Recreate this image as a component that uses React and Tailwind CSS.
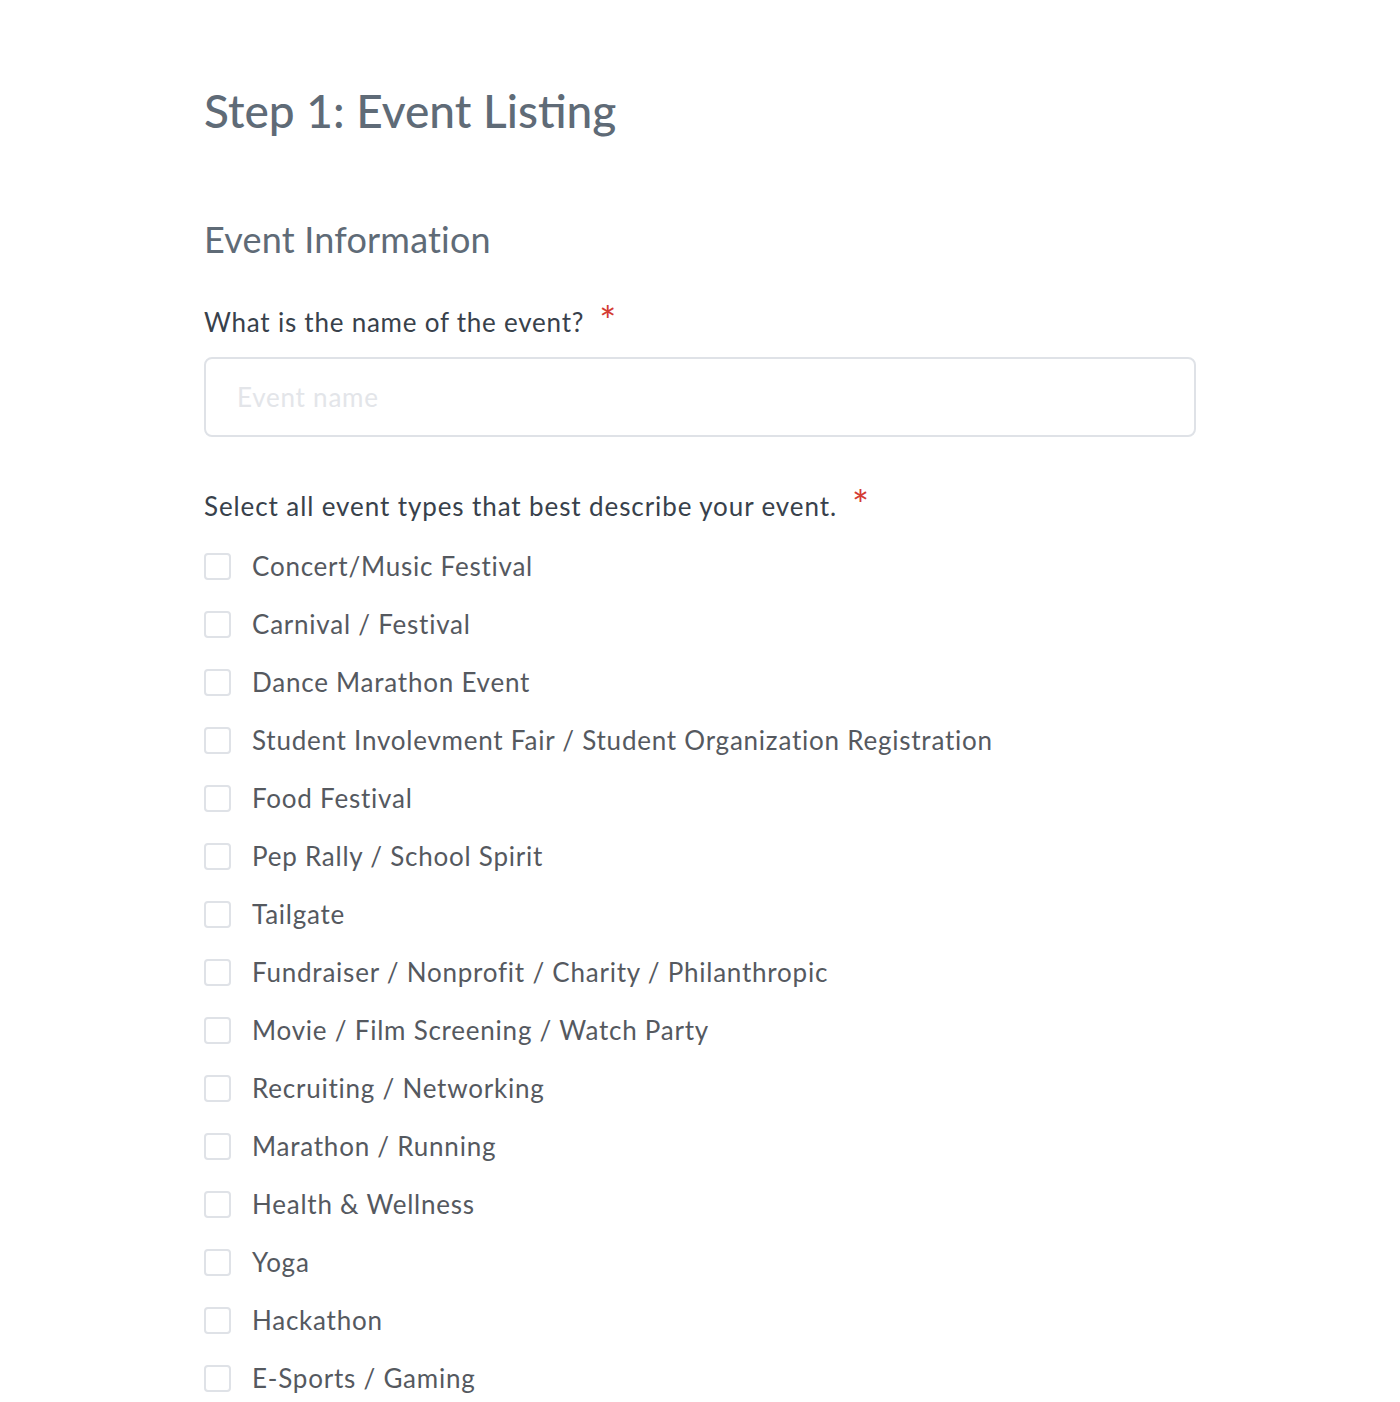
import React from "react";

const eventTypes = [
  "Concert/Music Festival",
  "Carnival / Festival",
  "Dance Marathon Event",
  "Student Involevment Fair / Student Organization Registration",
  "Food Festival",
  "Pep Rally / School Spirit",
  "Tailgate",
  "Fundraiser / Nonprofit / Charity / Philanthropic",
  "Movie / Film Screening / Watch Party",
  "Recruiting / Networking",
  "Marathon / Running",
  "Health & Wellness",
  "Yoga",
  "Hackathon",
  "E-Sports / Gaming",
];

export default function App() {
  return (
    <div className="min-h-screen bg-white font-['Lato','Noto_Sans',sans-serif]">
      <div className="ml-[204px] w-[992px] pt-[82px]">
        <h1 className="text-[46px] leading-[58px] font-medium text-[#5f6b77]">Step 1: Event Listing</h1>

        <h2 className="mt-[77px] text-[36px] leading-[44px] tracking-[0.2px] text-[#5f6b77]">Event Information</h2>

        <div className="mt-[45px] flex h-[32px] items-start text-[26px] leading-[32px] tracking-[0.77px] text-[#38414b]">
          <span>What is the name of the event?</span>
          <span className="ml-[15px] -mt-[5px] text-[40px] leading-none text-[#d43b33]">*</span>
        </div>
        <input
          type="text"
          placeholder="Event name"
          className="mt-[19px] h-[80px] w-full rounded-[8px] border-2 border-[#dfe2e7] px-[31px] text-[26px] tracking-[0.77px] text-[#38414b] placeholder-[#e3e5e9] outline-none"
        />

        <div className="mt-[53px] flex h-[32px] items-start text-[26px] leading-[32px] tracking-[0.9px] text-[#38414b]">
          <span>Select all event types that best describe your event.</span>
          <span className="ml-[15px] -mt-[5px] text-[40px] leading-none text-[#d43b33]">*</span>
        </div>

        <div className="mt-[15px] flex flex-col">
          {eventTypes.map((t) => (
            <label key={t} className="flex h-[58px] items-center">
              <span className="h-[27px] w-[27px] shrink-0 rounded-[4px] border-2 border-[#dfe2e7]" />
              <span className="ml-[21px] text-[26px] tracking-[0.77px] text-[#55595f]">{t}</span>
            </label>
          ))}
        </div>
      </div>
    </div>
  );
}
